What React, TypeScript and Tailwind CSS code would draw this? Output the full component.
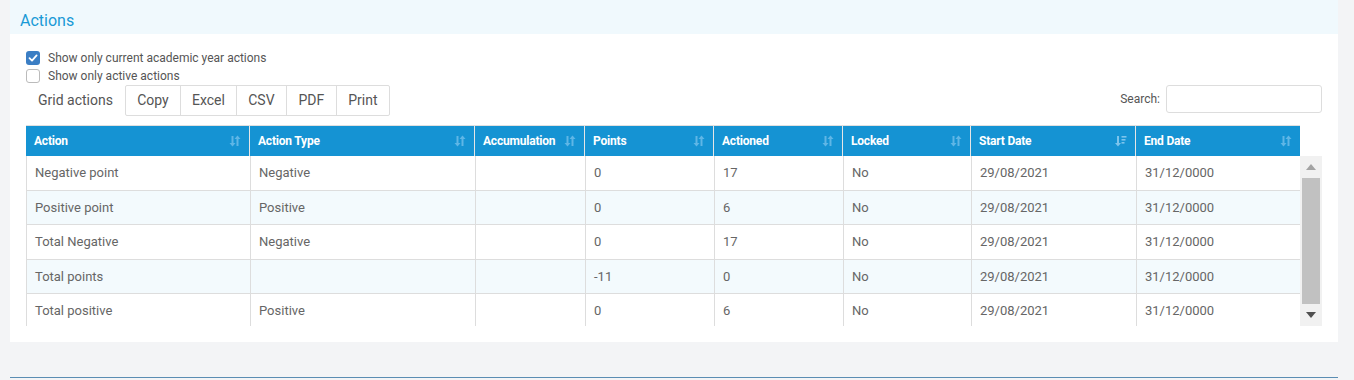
import React from 'react';

const columns = [
  { label: 'Action', width: 224 },
  { label: 'Action Type', width: 225 },
  { label: 'Accumulation', width: 110 },
  { label: 'Points', width: 129 },
  { label: 'Actioned', width: 129 },
  { label: 'Locked', width: 128 },
  { label: 'Start Date', width: 165, sorted: true },
  { label: 'End Date', width: 164 },
];

const rows = [
  ['Negative point', 'Negative', '', '0', '17', 'No', '29/08/2021', '31/12/0000'],
  ['Positive point', 'Positive', '', '0', '6', 'No', '29/08/2021', '31/12/0000'],
  ['Total Negative', 'Negative', '', '0', '17', 'No', '29/08/2021', '31/12/0000'],
  ['Total points', '', '', '-11', '0', 'No', '29/08/2021', '31/12/0000'],
  ['Total positive', 'Positive', '', '0', '6', 'No', '29/08/2021', '31/12/0000'],
];

const SortBoth = () => (
  <svg width="12" height="12" viewBox="0 0 12 12" className="shrink-0">
    <g fill="#5fb6e6">
      <rect x="2.5" y="1" width="2" height="8" />
      <path d="M0.5 8 L3.5 11.5 L6.5 8 Z" />
      <rect x="7.5" y="3" width="2" height="8" />
      <path d="M5.5 4 L8.5 0.5 L11.5 4 Z" />
    </g>
  </svg>
);

const SortDesc = () => (
  <svg width="12" height="12" viewBox="0 0 12 12" className="shrink-0">
    <g fill="#7cc4ec">
      <rect x="2" y="1" width="2" height="8" />
      <path d="M0 8 L3 11.5 L6 8 Z" />
      <rect x="6.5" y="1" width="5" height="1.6" />
      <rect x="6.5" y="4" width="4" height="1.6" />
      <rect x="6.5" y="7" width="3" height="1.6" />
    </g>
  </svg>
);

const gridCols = 'grid grid-cols-[224px_225px_110px_129px_129px_128px_165px_164px]';

export default function App() {
  return (
    <div className="w-[1354px] h-[380px] bg-[#f3f4f6] overflow-hidden" style={{ fontFamily: 'Roboto, "Liberation Sans", sans-serif' }}>
      <div className="ml-[10px] w-[1328px] h-[342px] bg-white flex flex-col">
        <div className="h-[34px] bg-[#f0f9fd] flex items-center px-[10px]">
          <h2 className="text-[16px] text-[#1a9ad6] leading-none mt-[7px]">Actions</h2>
        </div>

        <div className="pl-[16px] pt-[16px]">
          <label className="flex items-center gap-[8px] h-[16px] text-[12px] text-[#555]">
            <span className="w-[14px] h-[14px] rounded-[3px] bg-[#3b7ec4] flex items-center justify-center">
              <svg width="10" height="10" viewBox="0 0 10 10">
                <path d="M1.5 5.2 L4 7.6 L8.6 2.4" stroke="white" strokeWidth="1.8" fill="none" strokeLinecap="round" strokeLinejoin="round" />
              </svg>
            </span>
            Show only current academic year actions
          </label>
          <label className="flex items-center gap-[8px] h-[16px] mt-[2px] text-[12px] text-[#555]">
            <span className="w-[14px] h-[14px] rounded-[3px] border border-[#bbb] bg-white" />
            Show only active actions
          </label>

          <div className="flex items-center mt-[1px] pr-[16px]">
            <span className="text-[14px] text-[#555] pl-[12px] pr-[12px]">Grid actions</span>
            <div className="flex h-[31px] border border-[#ddd] rounded-[2px] text-[14px] text-[#555]">
              <button className="w-[55px] border-r border-[#ddd]">Copy</button>
              <button className="w-[56px] border-r border-[#ddd]">Excel</button>
              <button className="w-[50px] border-r border-[#ddd]">CSV</button>
              <button className="w-[50px] border-r border-[#ddd]">PDF</button>
              <button className="w-[52px]">Print</button>
            </div>
            <div className="ml-auto flex items-center gap-[6px] self-start">
              <span className="text-[12px] text-[#555]">Search:</span>
              <input className="w-[156px] h-[28px] border border-[#ddd] rounded-[3px] outline-none" />
            </div>
          </div>

          <div className="mt-[9px] w-[1296px]">
            <div className={`${gridCols} w-[1274px] h-[31px] bg-[#1593d3] border-t border-[#e0e0e0]`}>
              {columns.map((c, i) => (
                <div
                  key={c.label}
                  className={`flex items-center justify-between pl-[8px] pr-[8px] text-[12px] font-bold text-white tracking-[-0.2px] ${i < columns.length - 1 ? 'border-r border-[#e6e6e6]' : ''}`}
                >
                  <span>{c.label}</span>
                  {c.sorted ? <SortDesc /> : <SortBoth />}
                </div>
              ))}
            </div>
            <div className="flex h-[170px] overflow-hidden">
              <div className="w-[1274px] border-l border-[#ddd]">
                {rows.map((r, ri) => (
                  <div key={ri} className={`${gridCols} h-[34.6px] border-b border-[#ddd] ${ri % 2 === 1 ? 'bg-[#f3fafd]' : 'bg-white'}`}>
                    {r.map((cell, ci) => (
                      <div key={ci} className="flex items-center pl-[8px] text-[13px] text-[#666] border-r border-[#ddd]">
                        {cell}
                      </div>
                    ))}
                  </div>
                ))}
              </div>
              <div className="w-[22px] h-[170px] bg-[#f1f1f1] flex flex-col items-center">
                <div className="h-[22px] flex items-center justify-center">
                  <svg width="10" height="6" viewBox="0 0 10 6"><path d="M0 6 L5 0 L10 6 Z" fill="#a3a3a3" /></svg>
                </div>
                <div className="w-[18px] h-[126px] bg-[#c1c1c1]" />
                <div className="flex-1 flex items-center justify-center">
                  <svg width="10" height="6" viewBox="0 0 10 6"><path d="M0 0 L5 6 L10 0 Z" fill="#505050" /></svg>
                </div>
              </div>
            </div>
          </div>
        </div>
      </div>
      <div className="ml-[10px] w-[1328px] mt-[35px] border-t border-[#5a8db3]" />
    </div>
  );
}
